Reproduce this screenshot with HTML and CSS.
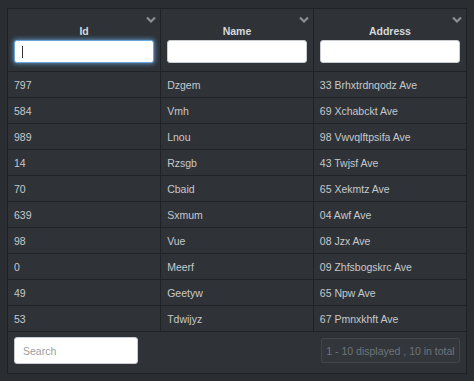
FILE: index.html
```html
<!doctype html>
<html lang="en-us">
<head>
    <title>Grid</title>
    <link rel="stylesheet" href="styles.css">
</head>
<body>
    <div class="grid">
        <table class="grid-table">
            <thead>
                <tr>
                    <th>
                        <span class="chevron"><svg width="10" height="7" viewBox="0 0 10 7"><path d="M1 1.5 L5 5.5 L9 1.5" fill="none" stroke="#8a8f96" stroke-width="2.2"/></svg></span>
                        <div class="col-title">Id</div>
                        <div class="filter-wrap">
                            <input class="filter focused" type="text" value="">
                            <span class="caret"></span>
                        </div>
                    </th>
                    <th>
                        <span class="chevron"><svg width="10" height="7" viewBox="0 0 10 7"><path d="M1 1.5 L5 5.5 L9 1.5" fill="none" stroke="#8a8f96" stroke-width="2.2"/></svg></span>
                        <div class="col-title">Name</div>
                        <div class="filter-wrap">
                            <input class="filter" type="text" value="">
                        </div>
                    </th>
                    <th>
                        <span class="chevron"><svg width="10" height="7" viewBox="0 0 10 7"><path d="M1 1.5 L5 5.5 L9 1.5" fill="none" stroke="#8a8f96" stroke-width="2.2"/></svg></span>
                        <div class="col-title">Address</div>
                        <div class="filter-wrap">
                            <input class="filter" type="text" value="">
                        </div>
                    </th>
                </tr>
            </thead>
            <tbody>
                <tr><td>797</td><td>Dzgem</td><td>33 Brhxtrdnqodz Ave</td></tr>
                <tr><td>584</td><td>Vmh</td><td>69 Xchabckt Ave</td></tr>
                <tr><td>989</td><td>Lnou</td><td>98 Vwvqlftpsifa Ave</td></tr>
                <tr><td>14</td><td>Rzsgb</td><td>43 Twjsf Ave</td></tr>
                <tr><td>70</td><td>Cbaid</td><td>65 Xekmtz Ave</td></tr>
                <tr><td>639</td><td>Sxmum</td><td>04 Awf Ave</td></tr>
                <tr><td>98</td><td>Vue</td><td>08 Jzx Ave</td></tr>
                <tr><td>0</td><td>Meerf</td><td>09 Zhfsbogskrc Ave</td></tr>
                <tr><td>49</td><td>Geetyw</td><td>65 Npw Ave</td></tr>
                <tr><td>53</td><td>Tdwijyz</td><td>67 Pmnxkhft Ave</td></tr>
            </tbody>
        </table>
        <div class="grid-footer">
            <input class="search" type="text" placeholder="Search">
            <div class="pager">1 - 10 displayed , 10 in total</div>
        </div>
    </div>
</body>
</html>
```

FILE: styles.css
```css
/* General styles */
body {
    margin: 0;
    padding: 8px 7px;
    background-color: #2a2e33;
    font-family: "Liberation Sans", Arial, sans-serif;
    color: #d0d3d6;
}

.grid {
    width: 460px;
    border: 1px solid #1f2226;
    background-color: #2f3338;
    box-sizing: border-box;
}

.grid-table {
    width: 100%;
    border-collapse: collapse;
    table-layout: fixed;
}

.grid-table th {
    position: relative;
    padding: 14px 6px 8px 6px;
    border-right: 1px solid #1f2226;
    border-bottom: 1px solid #1f2226;
    text-align: center;
    vertical-align: top;
}

.grid-table th:last-child,
.grid-table td:last-child {
    border-right: none;
}

.col-title {
    font-size: 10.5px;
    font-weight: bold;
    color: #d6d9dc;
    height: 17px;
    line-height: 16px;
}

.chevron {
    position: absolute;
    top: 7px;
    right: 4px;
    line-height: 0;
}

.filter-wrap {
    position: relative;
}

.filter {
    display: block;
    width: 100%;
    height: 23px;
    margin: 0;
    padding: 0 6px;
    box-sizing: border-box;
    border: 1px solid #c9ccd0;
    border-radius: 3px;
    background: #fff;
    font-family: "Liberation Sans", Arial, sans-serif;
    font-size: 12px;
    outline: none;
}

.filter.focused {
    border-color: #6aa6d8;
    box-shadow: 0 0 4px 1px rgba(110, 170, 230, 0.7);
}

.caret {
    position: absolute;
    left: 8px;
    top: 6px;
    width: 1px;
    height: 12px;
    background: #333;
}

.grid-table td {
    height: 25px;
    padding: 0 6px;
    border-right: 1px solid #1f2226;
    border-bottom: 1px solid #1f2226;
    font-size: 10.5px;
    color: #c6c9cc;
    white-space: nowrap;
    overflow: hidden;
}

.grid-footer {
    display: flex;
    justify-content: space-between;
    align-items: center;
    padding: 5px 6px 9px 6px;
}

.search {
    width: 124px;
    height: 27px;
    box-sizing: border-box;
    border: 1px solid #c9ccd0;
    border-radius: 3px;
    padding: 0 8px;
    font-family: "Liberation Sans", Arial, sans-serif;
    font-size: 10.5px;
    outline: none;
}

.search::placeholder {
    color: #9a9da1;
}

.pager {
    width: 139px;
    height: 25px;
    line-height: 25px;
    box-sizing: border-box;
    border: 1px solid #42464c;
    border-radius: 2px;
    background-color: #33373c;
    color: #6f7479;
    font-size: 10.5px;
    text-align: center;
}
```
